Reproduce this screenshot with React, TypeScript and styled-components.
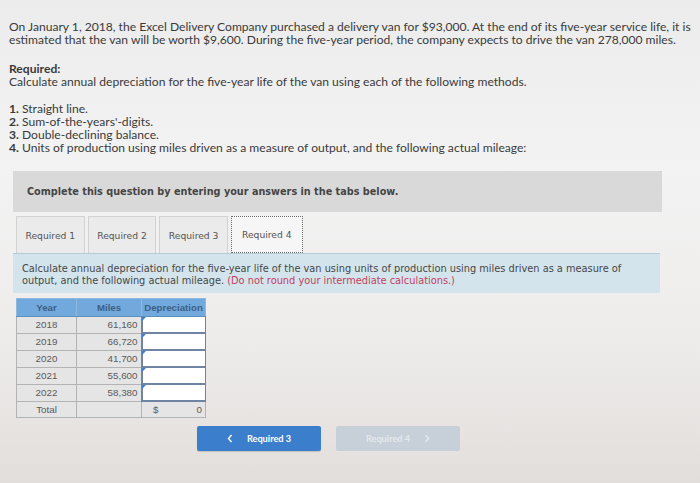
import styled, { createGlobalStyle } from 'styled-components'

const GlobalStyle = createGlobalStyle`
  html, body {
    margin: 0;
    padding: 0;
  }
  body {
    width: 700px;
    height: 483px;
    overflow: hidden;
    background: linear-gradient(180deg, #ececec 0%, #f3f3f3 35%, #eeeceb 70%, #e2dedc 100%);
  }
`

const colors = {
  text: '#3a3a3a',
  muted: '#555',
  bar: '#d9d9d9',
  info: '#d3e4ec',
  red: '#c4405e',
  header: '#72a9dd',
  headerText: '#3d5f83',
  cell: '#e5e5e5',
  cellBorder: '#b3b3b3',
  blue: '#3b7ecb',
  disabled: '#c7d0d9',
}

const rows = [
  { year: '2018', miles: '61,160' },
  { year: '2019', miles: '66,720' },
  { year: '2020', miles: '41,700' },
  { year: '2021', miles: '55,600' },
  { year: '2022', miles: '58,380' },
]

const tabs = ['Required 1', 'Required 2', 'Required 3', 'Required 4']

const Page = styled.div`
  padding: 20px 0 0 9px;
  color: ${colors.text};
`

const Prose = styled.div`
  font-family: 'Lato', 'Liberation Sans', sans-serif;
  font-size: 12.1px;
  line-height: 13px;
  & + & {
    margin-top: 16px;
  }
`

const Line = styled.span`
  display: block;
  white-space: nowrap;
`

const Strong = styled.b`
  display: inline-block;
  font-weight: 700;
`

const List = styled(Prose)`
  && {
    margin-top: 14px;
  }
`

const InstructionBar = styled.div`
  margin: 17px 0 0 4px;
  width: 649px;
  height: 41px;
  box-sizing: border-box;
  padding-left: 14px;
  display: flex;
  align-items: center;
  background: ${colors.bar};
  font-family: 'DejaVu Sans', Verdana, sans-serif;
  font-weight: 700;
  font-size: 9.7px;
  color: #454545;
`

const TabRow = styled.div`
  display: flex;
  gap: 3px;
  margin: 4px 0 0 7px;
  height: 37px;
`

const Tab = styled.div<{ $active?: boolean }>`
  display: flex;
  align-items: center;
  padding: 0 ${(p) => (p.$active ? 10 : 8.5)}px;
  font-family: 'DejaVu Sans', Verdana, sans-serif;
  font-size: 9.2px;
  color: ${colors.muted};
  background: ${(p) => (p.$active ? '#f6f6f6' : '#ebebeb')};
  border: ${(p) => (p.$active ? '1px dotted #6a6a6a' : '1px solid #d2d2d2')};
  border-bottom: ${(p) => (p.$active ? '1px dotted #6a6a6a' : 'none')};
`

const InfoBox = styled.div`
  margin-left: 4px;
  width: 647px;
  box-sizing: border-box;
  padding: 9px 0 6px 9px;
  background: ${colors.info};
  border-top: 1px solid #b7ccd6;
  font-family: 'DejaVu Sans', Verdana, sans-serif;
  font-size: 9.8px;
  line-height: 12px;
  color: #474747;
`

const Red = styled.span`
  color: ${colors.red};
`

const Table = styled.table`
  margin: 5px 0 0 7px;
  border-collapse: collapse;
  font-family: 'Liberation Sans', Arial, sans-serif;
  font-size: 9.8px;
  color: #5a5a5a;
`

const Th = styled.th<{ $w: number }>`
  width: ${(p) => p.$w}px;
  height: 17px;
  padding: 0;
  background: ${colors.header};
  color: ${colors.headerText};
  font-weight: 700;
  font-size: 9.7px;
  border: 1px solid #8fb8df;
  border-bottom: 1px solid #5d8fbe;
  text-align: center;
`

const Td = styled.td<{ $align?: 'left' | 'right' | 'center' }>`
  height: 15px;
  padding: 0 3px;
  background: ${colors.cell};
  border: 1px solid ${colors.cellBorder};
  text-align: ${(p) => p.$align ?? 'center'};
`

const InputCell = styled.td`
  position: relative;
  height: 15px;
  padding: 0;
  background: #fff;
  border: 1px solid #6f84a3;
  border-width: 1px 1px 2px 2px;
  &::before {
    content: '';
    position: absolute;
    left: -1px;
    top: 0;
    border-top: 4px solid #3f7fd0;
    border-right: 4px solid transparent;
  }
`

const TotalCell = styled.td`
  height: 15px;
  padding: 0 3px 0 11px;
  background: ${colors.cell};
  border: 1px solid ${colors.cellBorder};
`

const TotalInner = styled.div`
  display: flex;
  justify-content: space-between;
`

const ButtonRow = styled.div`
  display: flex;
  gap: 15px;
  margin: 8px 0 0 188px;
`

const NavButton = styled.div<{ $disabled?: boolean }>`
  width: 124px;
  height: 25px;
  border-radius: 2px;
  display: flex;
  align-items: center;
  justify-content: center;
  gap: 14px;
  font-family: 'Lato', 'Liberation Sans', sans-serif;
  font-weight: 700;
  font-size: 9.2px;
  background: ${(p) => (p.$disabled ? colors.disabled : colors.blue)};
  color: ${(p) => (p.$disabled ? '#e3e8ee' : '#fff')};
  box-shadow: ${(p) => (p.$disabled ? 'none' : '0 1px 1px rgba(0,0,0,0.15)')};
`

const Chevron = ({ dir }: { dir: 'left' | 'right' }) => (
  <svg width="6" height="9" viewBox="0 0 6 9" fill="none">
    <path
      d={dir === 'left' ? 'M4.5 1 1.5 4.5 4.5 8' : 'M1.5 1 4.5 4.5 1.5 8'}
      stroke="currentColor"
      strokeWidth="1.4"
    />
  </svg>
)

export default function App() {
  return (
    <>
      <GlobalStyle />
      <Page>
        <Prose>
          <Line>
            On January 1, 2018, the Excel Delivery Company purchased a delivery van for $93,000. At the end of its
            five-year service life, it is
          </Line>
          <Line>
            estimated that the van will be worth $9,600. During the five-year period, the company expects to drive
            the van 278,000 miles.
          </Line>
        </Prose>
        <Prose>
          <Line>
            <Strong>Required:</Strong>
          </Line>
          <Line>Calculate annual depreciation for the five-year life of the van using each of the following methods.</Line>
        </Prose>
        <List>
          <Line>
            <Strong>1.</Strong> Straight line.
          </Line>
          <Line>
            <Strong>2.</Strong> Sum-of-the-years'-digits.
          </Line>
          <Line>
            <Strong>3.</Strong> Double-declining balance.
          </Line>
          <Line>
            <Strong>4.</Strong> Units of production using miles driven as a measure of output, and the following actual
            mileage:
          </Line>
        </List>

        <InstructionBar>Complete this question by entering your answers in the tabs below.</InstructionBar>

        <TabRow>
          {tabs.map((t, i) => (
            <Tab key={t} $active={i === 3}>
              {t}
            </Tab>
          ))}
        </TabRow>

        <InfoBox>
          <Line>
            Calculate annual depreciation for the five-year life of the van using units of production using miles
            driven as a measure of
          </Line>
          <Line>
            output, and the following actual mileage. <Red>(Do not round your intermediate calculations.)</Red>
          </Line>
        </InfoBox>

        <Table>
          <thead>
            <tr>
              <Th $w={59}>Year</Th>
              <Th $w={64}>Miles</Th>
              <Th $w={63}>Depreciation</Th>
            </tr>
          </thead>
          <tbody>
            {rows.map((r) => (
              <tr key={r.year}>
                <Td>{r.year}</Td>
                <Td $align="right">{r.miles}</Td>
                <InputCell />
              </tr>
            ))}
            <tr>
              <Td>Total</Td>
              <Td />
              <TotalCell>
                <TotalInner>
                  <span>$</span>
                  <span>0</span>
                </TotalInner>
              </TotalCell>
            </tr>
          </tbody>
        </Table>

        <ButtonRow>
          <NavButton>
            <Chevron dir="left" />
            Required 3
          </NavButton>
          <NavButton $disabled>
            Required 4
            <Chevron dir="right" />
          </NavButton>
        </ButtonRow>
      </Page>
    </>
  )
}
